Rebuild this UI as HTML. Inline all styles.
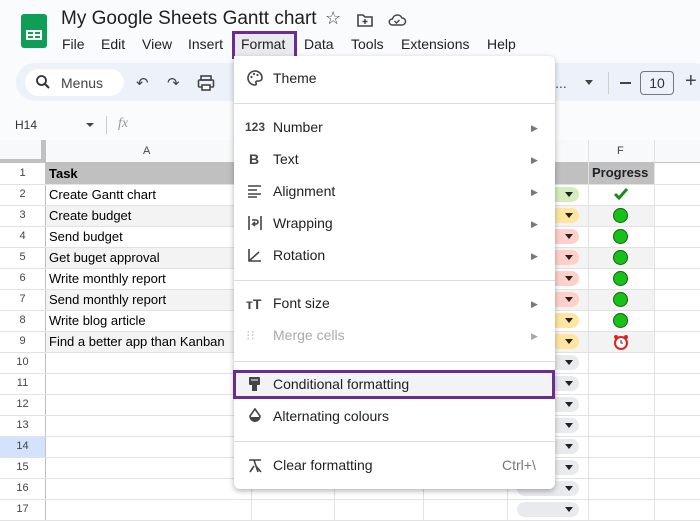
<!DOCTYPE html>
<html><head><style>
*{margin:0;padding:0;box-sizing:border-box}
body{width:700px;height:521px;overflow:hidden;background:#f9fbfd;font-family:"Liberation Sans",Arial,sans-serif;position:relative;color:#202124}
.abs{position:absolute}
.menu span{position:absolute;top:36px;font-size:14px;color:#1f1f1f}
.grid{position:absolute;left:0;top:140px;width:700px;height:381px;background:#fff}
.rh{position:absolute;left:0;width:45px;text-align:center;font-size:11px;color:#444}
.hl{position:absolute;left:0;width:700px;height:1px;background:#e2e2e2}
.vl{position:absolute;top:140px;width:1px;height:381px;background:#e2e2e2}
.cell{position:absolute;left:49px;font-size:13px;color:#000}
.mi{position:absolute;left:273px;font-size:14px;color:#1f1f1f}
.ic{position:absolute;left:247px;font-size:14px;color:#444;font-weight:bold}
.arr{position:absolute;left:531px;font-size:9px;color:#777}
.sep{position:absolute;left:234px;width:321px;height:1px;background:#dadce0}
.pill{position:absolute;left:517px;width:62px;height:15px;border-radius:8px}
.pill:after{content:"";position:absolute;right:6px;top:5px;border-left:4px solid transparent;border-right:4px solid transparent;border-top:5px solid #222}
.dot{position:absolute;left:613px;width:15px;height:15px;border-radius:50%;background:#17c217;border:1px solid #1a5a1a}
</style></head><body>
<div class="abs" style="left:21px;top:14px;width:26px;height:34px;background:#0f9d58;border-radius:3px"></div>
<div class="abs" style="left:26px;top:30px;width:16px;height:10px;border:2px solid #fff;background:#0f9d58"></div>
<div class="abs" style="left:33px;top:30px;width:2px;height:10px;background:#fff"></div>
<div class="abs" style="left:26px;top:34px;width:16px;height:2px;background:#fff"></div>
<div class="abs" style="left:61px;top:8px;font-size:19px;color:#1f1f1f">My Google Sheets Gantt chart</div>
<div class="abs" style="left:325px;top:8px;font-size:18px;color:#444">☆</div>
<svg class="abs" style="left:356px;top:12px" width="18" height="16"><path d="M2 3h5l2 2h7v9H2z" fill="none" stroke="#444" stroke-width="1.6"/><path d="M9 7v5M6.5 9.5h5" stroke="#444" stroke-width="1.5"/></svg>
<svg class="abs" style="left:387px;top:12px" width="20" height="16"><path d="M5 13h10a3.5 3.5 0 0 0 0-7 5 5 0 0 0-9.5 1A3 3 0 0 0 5 13z" fill="none" stroke="#444" stroke-width="1.5"/><path d="M7.5 9l2 2 3-3" fill="none" stroke="#444" stroke-width="1.4"/></svg>
<div class="menu">
<span style="left:62px">File</span><span style="left:101px">Edit</span><span style="left:142px">View</span><span style="left:188px">Insert</span>
<span style="left:304px">Data</span><span style="left:351px">Tools</span><span style="left:401px">Extensions</span><span style="left:487px">Help</span>
</div>
<div class="abs" style="left:232px;top:31px;width:65px;height:28px;border:3px solid #6a2c91;background:#e8eaed"></div>
<span class="abs" style="left:241px;top:36px;font-size:14px;color:#1f1f1f">Format</span>
<div class="abs" style="left:16px;top:63px;width:700px;height:38px;background:#edf2fa;border-radius:19px"></div>
<div class="abs" style="left:25px;top:69px;width:99px;height:27px;background:#fff;border-radius:14px"></div>
<svg class="abs" style="left:35px;top:74px" width="16" height="16"><circle cx="6.5" cy="6.5" r="4.5" fill="none" stroke="#333" stroke-width="1.8"/><path d="M10 10l4 4" stroke="#333" stroke-width="2"/></svg>
<div class="abs" style="left:61px;top:75px;font-size:14px;color:#444">Menus</div>
<div class="abs" style="left:136px;top:74px;font-size:15px;color:#444">↶</div>
<div class="abs" style="left:167px;top:74px;font-size:15px;color:#444">↷</div>
<svg class="abs" style="left:197px;top:75px" width="18" height="16"><rect x="4" y="1" width="10" height="4" fill="none" stroke="#444" stroke-width="1.6"/><rect x="1.5" y="5" width="15" height="7" rx="1" fill="none" stroke="#444" stroke-width="1.6"/><rect x="5" y="10" width="8" height="5" fill="#fff" stroke="#444" stroke-width="1.6"/></svg>
<div class="abs" style="left:552px;top:75px;font-size:14px;color:#444">l...</div>
<div class="abs" style="left:585px;top:80px;border-left:4px solid transparent;border-right:4px solid transparent;border-top:5px solid #444"></div>
<div class="abs" style="left:608px;top:72px;width:1px;height:22px;background:#ccc"></div>
<div class="abs" style="left:620px;top:82px;width:11px;height:2px;background:#444"></div>
<div class="abs" style="left:640px;top:71px;width:34px;height:24px;border:1px solid #777;border-radius:4px;font-size:14px;text-align:center;line-height:22px;color:#333">10</div>
<div class="abs" style="left:685px;top:70px;font-size:20px;color:#444">+</div>
<div class="abs" style="left:15px;top:118px;font-size:12px;color:#333">H14</div>
<div class="abs" style="left:86px;top:123px;border-left:4px solid transparent;border-right:4px solid transparent;border-top:4px solid #444"></div>
<div class="abs" style="left:106px;top:116px;width:1px;height:18px;background:#ccc"></div>
<div class="abs" style="left:118px;top:116px;font-size:14px;color:#999;font-style:italic;font-family:'Liberation Serif',serif">fx</div>
<div class="grid"></div>
<div class="abs" style="left:0;top:140px;width:45px;height:23px;background:#f8f9fa"></div>
<div class="abs" style="left:0;top:140px;width:45px;height:23px;border-right:4px solid #c0c0c0;border-bottom:4px solid #c0c0c0"></div>
<div class="abs" style="left:45px;top:140px;width:655px;height:23px;background:#f8f9fa;border-bottom:1px solid #c0c0c0"></div>
<div class="abs" style="left:143px;top:145px;font-size:11px;color:#444">A</div>
<div class="abs" style="left:617px;top:145px;font-size:11px;color:#444">F</div>
<div class="abs" style="left:45px;top:163px;width:543px;height:21px;background:#c0c0c0"></div>
<div class="abs" style="left:588px;top:163px;width:66px;height:21px;background:#c0c0c0"></div>
<div class="abs" style="left:45px;top:205px;width:543px;height:21px;background:#f3f3f3"></div><div class="abs" style="left:588px;top:205px;width:66px;height:21px;background:#f3f3f3"></div>
<div class="abs" style="left:45px;top:247px;width:609px;height:21px;background:#f3f3f3"></div>
<div class="abs" style="left:45px;top:289px;width:609px;height:21px;background:#f3f3f3"></div>
<div class="abs" style="left:45px;top:331px;width:609px;height:21px;background:#f3f3f3"></div>
<div class="abs" style="left:0;top:436px;width:45px;height:21px;background:#d3e3fd"></div>
<div class="vl" style="left:45px;background:#c0c0c0"></div>
<div class="vl" style="left:251px"></div><div class="vl" style="left:334px"></div><div class="vl" style="left:423px"></div><div class="vl" style="left:507px"></div><div class="vl" style="left:588px"></div><div class="vl" style="left:654px"></div>
<div class="hl" style="top:184px"></div><div class="hl" style="top:205px"></div><div class="hl" style="top:226px"></div><div class="hl" style="top:247px"></div><div class="hl" style="top:268px"></div><div class="hl" style="top:289px"></div><div class="hl" style="top:310px"></div><div class="hl" style="top:331px"></div><div class="hl" style="top:352px"></div><div class="hl" style="top:373px"></div><div class="hl" style="top:394px"></div><div class="hl" style="top:415px"></div><div class="hl" style="top:436px"></div><div class="hl" style="top:457px"></div><div class="hl" style="top:478px"></div><div class="hl" style="top:499px"></div><div class="hl" style="top:520px"></div>
<div class="rh" style="top:167px">1</div><div class="rh" style="top:188px">2</div><div class="rh" style="top:209px">3</div><div class="rh" style="top:230px">4</div><div class="rh" style="top:251px">5</div><div class="rh" style="top:272px">6</div><div class="rh" style="top:293px">7</div><div class="rh" style="top:314px">8</div><div class="rh" style="top:335px">9</div><div class="rh" style="top:356px">10</div><div class="rh" style="top:377px">11</div><div class="rh" style="top:398px">12</div><div class="rh" style="top:419px">13</div><div class="rh" style="top:440px">14</div><div class="rh" style="top:461px">15</div><div class="rh" style="top:482px">16</div><div class="rh" style="top:503px">17</div>
<div class="cell" style="top:166px;font-weight:bold">Task</div>
<div class="cell" style="top:187px">Create Gantt chart</div><div class="cell" style="top:208px">Create budget</div><div class="cell" style="top:229px">Send budget</div><div class="cell" style="top:250px">Get buget approval</div><div class="cell" style="top:271px">Write monthly report</div><div class="cell" style="top:292px">Send monthly report</div><div class="cell" style="top:313px">Write blog article</div><div class="cell" style="top:334px">Find a better app than Kanban</div>
<div class="abs" style="left:592px;top:165px;font-size:13px;font-weight:bold">Progress</div>
<div class="pill" style="top:187px;background:#d4edbc"></div><div class="pill" style="top:208px;background:#ffe5a0"></div><div class="pill" style="top:229px;background:#ffcfc9"></div><div class="pill" style="top:250px;background:#ffcfc9"></div><div class="pill" style="top:271px;background:#ffcfc9"></div><div class="pill" style="top:292px;background:#ffcfc9"></div><div class="pill" style="top:313px;background:#ffe5a0"></div><div class="pill" style="top:334px;background:#ffe5a0"></div>
<div class="pill" style="top:355px;background:#e8eaed"></div><div class="pill" style="top:376px;background:#e8eaed"></div><div class="pill" style="top:397px;background:#e8eaed"></div><div class="pill" style="top:418px;background:#e8eaed"></div><div class="pill" style="top:439px;background:#e8eaed"></div><div class="pill" style="top:460px;background:#e8eaed"></div><div class="pill" style="top:481px;background:#e8eaed"></div><div class="pill" style="top:502px;background:#e8eaed"></div>
<svg class="abs" style="left:613px;top:187px" width="16" height="14"><path d="M2 7l4 4 8-9" fill="none" stroke="#1a8a1a" stroke-width="3"/></svg>
<div class="dot" style="top:208px"></div><div class="dot" style="top:229px"></div><div class="dot" style="top:250px"></div><div class="dot" style="top:271px"></div><div class="dot" style="top:292px"></div><div class="dot" style="top:313px"></div>
<svg class="abs" style="left:613px;top:334px" width="16" height="16"><circle cx="8" cy="9" r="6" fill="#fff" stroke="#d22" stroke-width="2"/><circle cx="3" cy="3" r="2" fill="#d22"/><circle cx="13" cy="3" r="2" fill="#d22"/><path d="M8 6v3h2" stroke="#333" fill="none"/></svg>
<div class="abs" style="left:234px;top:56px;width:321px;height:433px;background:#fff;border-radius:0 6px 6px 6px;box-shadow:0 2px 6px rgba(0,0,0,.3)"></div>
<svg class="abs" style="left:246px;top:69px" width="18" height="18"><path d="M9 2a7 7 0 0 0 0 14c1.2 0 1.5-1 1-2-.5-1 0-2 1.2-2H13a3 3 0 0 0 3-3c0-4-3.2-7-7-7z" fill="none" stroke="#444" stroke-width="1.6"/><circle cx="5.5" cy="8" r="1.1" fill="#444"/><circle cx="8" cy="5" r="1.1" fill="#444"/><circle cx="11.5" cy="6" r="1.1" fill="#444"/></svg>
<div class="mi" style="top:70px">Theme</div>
<div class="sep" style="top:103px"></div>
<div class="ic" style="top:120px;font-size:12px;left:245px">123</div><div class="mi" style="top:119px">Number</div><div class="arr" style="top:123px">▶</div>
<div class="ic" style="top:151px;left:249px">B</div><div class="mi" style="top:151px">Text</div><div class="arr" style="top:155px">▶</div>
<svg class="abs" style="left:247px;top:184px" width="16" height="14"><path d="M1 2h13M1 6h9M1 10h13M1 13h9" stroke="#444" stroke-width="1.6"/></svg><div class="mi" style="top:183px">Alignment</div><div class="arr" style="top:187px">▶</div>
<svg class="abs" style="left:247px;top:215px" width="16" height="16"><path d="M2 1v14M14 1v14M5 5h4a2 2 0 0 1 0 4H6l2-2M6 9l2 2" stroke="#444" stroke-width="1.6" fill="none"/></svg><div class="mi" style="top:215px">Wrapping</div><div class="arr" style="top:219px">▶</div>
<svg class="abs" style="left:247px;top:247px" width="16" height="16"><path d="M2 2v12h12M2 14l10-9" stroke="#444" stroke-width="1.6" fill="none"/></svg><div class="mi" style="top:247px">Rotation</div><div class="arr" style="top:251px">▶</div>
<div class="sep" style="top:280px"></div>
<div class="ic" style="top:296px;left:246px">тT</div><div class="mi" style="top:295px">Font size</div><div class="arr" style="top:299px">▶</div>
<div class="ic" style="top:327px;left:246px;color:#ccc;font-weight:normal">⁝⁝</div><div class="mi" style="top:327px;color:#aaa">Merge cells</div><div class="arr" style="top:331px;color:#aaa">▶</div>
<div class="sep" style="top:361px"></div>
<div class="abs" style="left:233px;top:370px;width:322px;height:29px;border:3px solid #6a2c91;background:#f1f3f4"></div>
<svg class="abs" style="left:248px;top:376px" width="14" height="16"><rect x="1" y="1" width="11" height="8" rx="1" fill="#444"/><rect x="4" y="9" width="5" height="6" fill="#444"/><path d="M3 4h7" stroke="#fff"/></svg><div class="mi" style="top:376px">Conditional formatting</div>
<svg class="abs" style="left:248px;top:408px" width="14" height="16"><path d="M7 1L2 8a5 5 0 1 0 10 0z" fill="none" stroke="#444" stroke-width="1.6"/><path d="M2 9h10a5 5 0 0 1-10 0z" fill="#444"/></svg><div class="mi" style="top:408px">Alternating colours</div>
<div class="sep" style="top:441px"></div>
<svg class="abs" style="left:247px;top:458px" width="16" height="16"><path d="M2 2h12M7 2l4 12M3 14l4-6M9 8l5 6" stroke="#444" stroke-width="1.6" fill="none"/></svg><div class="mi" style="top:457px">Clear formatting</div>
<div class="abs" style="left:502px;top:457px;font-size:14px;color:#777">Ctrl+\</div>
</body></html>
